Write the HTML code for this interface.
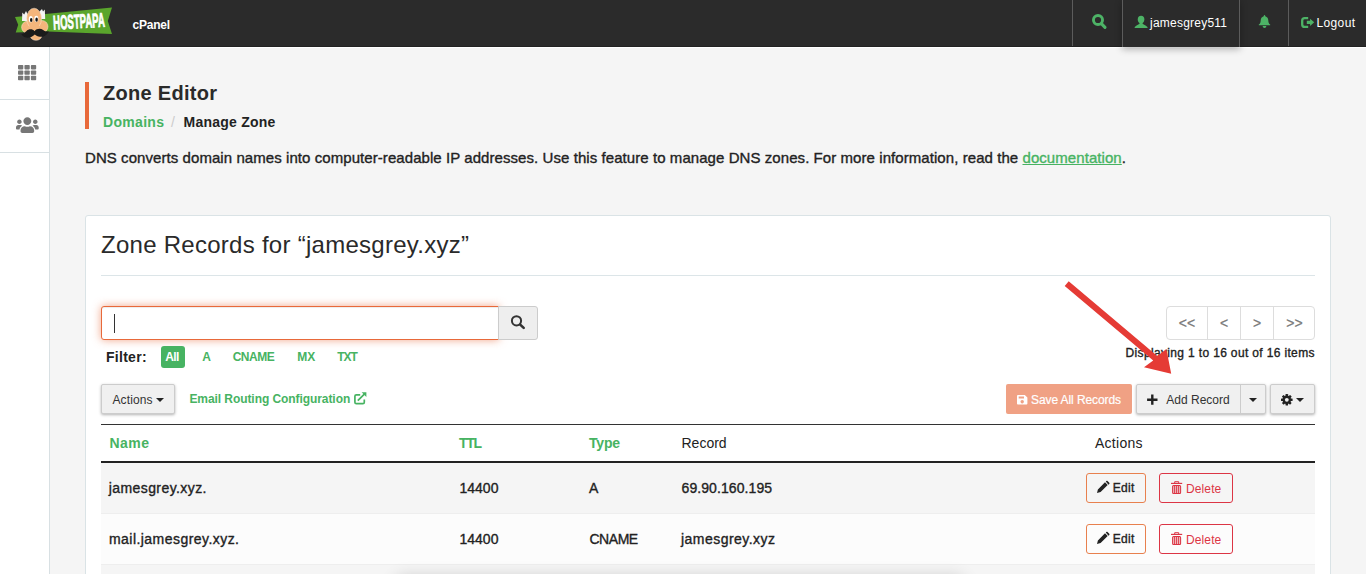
<!DOCTYPE html>
<html lang="en">
<head>
<meta charset="utf-8">
<title>Zone Editor</title>
<style>
*{box-sizing:border-box;margin:0;padding:0}
html,body{width:1366px;height:574px;overflow:hidden;background:#f5f5f5;font-family:"Liberation Sans",sans-serif;color:#222;}
a{text-decoration:none;color:#47b362}
svg{position:absolute;overflow:visible}
.abs{position:absolute;white-space:nowrap}
.sb{-webkit-text-stroke:0.35px currentColor}
#top{position:absolute;left:0;top:0;width:1366px;height:47px;background:#2b2b2b;border-bottom:1px solid #222;z-index:5}
#brand{position:absolute;left:132.5px;top:17px;color:#fff;font-size:12px;line-height:16px;font-weight:bold}
#top .sep{position:absolute;top:0;width:1px;height:46px;background:#5c5c5c}
#top .txt{position:absolute;color:#fff;font-size:12px;line-height:16px;top:15px}
#userbox{position:absolute;left:1122px;top:0;width:118px;height:47px;background:#2b2b2b;box-shadow:0 2px 7px rgba(0,0,0,.3);border-left:1px solid #5c5c5c;border-right:1px solid #5c5c5c}
#side{position:absolute;left:0;top:47px;width:50px;height:527px;background:#fff;border-right:1px solid #d8e0e3}
#side .cell{height:53px;border-bottom:1px solid #d8e0e3;position:relative}
#bar{left:85px;top:82px;width:4px;height:47px;background:#e8693a}
h1{left:103px;top:80px;font-size:20px;font-weight:bold;color:#2a2a2a;line-height:26px;letter-spacing:.3px}
#crumb{left:103px;top:112px;font-size:14px;font-weight:bold;line-height:20px}
#desc{left:85px;top:148px;font-size:15px;line-height:20px;color:#222;letter-spacing:.068px}
#panel{left:85px;top:215px;width:1246px;height:400px;background:#fff;border:1px solid #dae3e6;border-radius:3px}
h2{left:101px;top:228.5px;font-size:24px;font-weight:normal;line-height:32px;color:#2a2a2a;letter-spacing:.27px}
#hr{left:101px;top:275px;width:1214px;height:1px;background:#dce5e8}
#search{left:101px;top:306px;width:398px;height:34px;border:1px solid #e8693a;border-radius:3px 0 0 3px;background:#fff;box-shadow:0 0 8px rgba(232,105,58,.6), inset 0 1px 1px rgba(0,0,0,.075)}
#caret{left:114px;top:314px;width:1px;height:19px;background:#333}
#sbtn{left:498px;top:306px;width:40px;height:34px;border:1px solid #ccc;border-radius:0 3px 3px 0;background:#eee}
#filter{left:106px;top:347px;font-size:14px;line-height:20px;font-weight:bold;color:#222}
.fl{font-size:12px;font-weight:bold;color:#47b362;line-height:20px;top:347px}
#fall{left:160.5px;top:346px;width:24.5px;height:22px;background:#47b362;border-radius:3px}
.btn{border:1px solid #ccc;background:#f0f0f0;border-radius:2px;height:30px;box-shadow:0 1px 3px rgba(0,0,0,.3)}
.bt{font-size:12px;line-height:20px;color:#333;top:390px}
.dn{width:0;height:0;border-left:4px solid transparent;border-right:4px solid transparent;border-top:4px solid #222}
#pag{left:1166px;top:306px;width:149px;height:34px;border:1px solid #ddd;border-radius:4px;background:#fff}
#pag i{position:absolute;top:0;width:1px;height:32px;background:#ddd}
#pag span{position:absolute;top:0;line-height:32px;font-size:14px;color:#7a7a7a;-webkit-text-stroke:.25px #7a7a7a;text-align:center;font-style:normal}
#disp{left:1125.5px;top:344px;font-size:12px;line-height:18px;font-weight:normal;color:#222}
.th{top:432.5px;font-size:14px;line-height:20px}
.g{font-weight:bold;color:#47b362}
.td{font-size:14px;line-height:20px;color:#222}
.row{left:101px;width:1214px;height:51px}
.ebtn{width:60px;height:30px;border:1px solid #e8804e;border-radius:3px}
.dbtn{width:74px;height:30px;border:1px solid #dc3545;border-radius:3px}
.et{font-size:12px;line-height:18px;color:#222}
.dt{font-size:12px;line-height:18px;color:#dc3545}
</style>
</head>
<body>
<div id="top">
  <div id="brand" style="letter-spacing:-0.22px">cPanel</div>
  <div class="sep" style="left:1072px"></div>
  <div id="userbox"></div>
  <div class="sep" style="left:1288px"></div>
  <div class="txt" id="tuser" style="letter-spacing:0.23px;left:1150px">jamesgrey511</div>
  <div class="txt" id="tlogout" style="letter-spacing:0.36px;left:1316.5px">Logout</div>
</div>
<div id="side"><div class="cell"></div><div class="cell"></div></div>
<div class="abs" style="left:50px;top:47px;width:1316px;height:1px;background:#fff"></div>
<div id="bar" class="abs"></div>
<h1 class="abs">Zone Editor</h1>
<div id="crumb" class="abs"><a id="cr1" style="letter-spacing:0.31px">Domains</a> <span id="cr2" style="color:#ccc;font-weight:normal;padding:0 4.8px 0 2.8px">/</span> <span id="cr3" style="letter-spacing:0.23px">Manage Zone</span></div>
<div id="desc" class="abs sb">DNS converts domain names into computer-readable IP addresses. Use this feature to manage DNS zones. For more information, read the <a style="text-decoration:underline">documentation</a>.</div>
<div id="panel" class="abs"></div>
<h2 class="abs">Zone Records for “jamesgrey.xyz”</h2>
<div id="hr" class="abs"></div>
<div id="search" class="abs"></div><div id="caret" class="abs"></div>
<div id="sbtn" class="abs"></div>
<div id="filter" style="letter-spacing:0.28px" class="abs">Filter:</div>
<div id="fall" class="abs"></div>
<div class="abs fl" id="f0" style="letter-spacing:-0.67px;left:165.3px;color:#fff">All</div>
<div class="abs fl" id="f1" style="left:202.2px">A</div>
<div class="abs fl" id="f2" style="letter-spacing:-0.50px;left:232.7px">CNAME</div>
<div class="abs fl" id="f3" style="left:297.3px">MX</div>
<div class="abs fl" id="f4" style="letter-spacing:-1.04px;left:337.3px">TXT</div>

<div class="abs btn" style="left:101px;top:384px;width:74px"></div>
<div class="abs bt" id="bact" style="letter-spacing:0.11px;left:112.5px">Actions</div>
<div class="abs dn" style="left:156px;top:398px"></div>
<div class="abs" id="email" style="letter-spacing:-0.07px;left:189.4px;top:390px;font-size:12px;line-height:18px;color:#47b362;font-weight:bold">Email Routing Configuration</div>

<div id="pag" class="abs"><i style="left:40px"></i><i style="left:73px"></i><i style="left:106px"></i>
<span style="left:0;width:40px">&lt;&lt;</span><span style="left:41px;width:32px">&lt;</span><span style="left:74px;width:32px">&gt;</span><span style="left:107px;width:41px">&gt;&gt;</span></div>
<div id="disp" style="letter-spacing:0.35px" class="abs sb">Displaying 1 to 16 out of 16 items</div>

<div class="abs" style="left:1006px;top:384px;width:126px;height:30px;background:#f0a184;border-radius:2px"></div>
<div class="abs bt" id="bsave" style="-webkit-text-stroke:.2px #fff;letter-spacing:-0.09px;left:1031px;color:#fff">Save All Records</div>
<div class="abs btn" style="left:1136px;top:384px;width:130px"></div>
<div class="abs bt" id="badd" style="left:1166.3px">Add Record</div>
<div class="abs" style="left:1240px;top:385px;width:1px;height:28px;background:#ccc"></div>
<div class="abs dn" style="left:1249px;top:398px"></div>
<div class="abs btn" style="left:1270px;top:384px;width:45px"></div>
<div class="abs dn" style="left:1296px;top:398px"></div>

<div class="abs" style="left:101px;top:424px;width:1214px;height:1px;background:#333"></div>
<div class="abs th g" id="h1" style="letter-spacing:0.45px;left:109.5px">Name</div>
<div class="abs th g" id="h2" style="letter-spacing:-1.33px;left:459px">TTL</div>
<div class="abs th g" id="h3" style="letter-spacing:-0.21px;left:589px">Type</div>
<div class="abs th" id="h4" style="left:681.5px">Record</div>
<div class="abs th" id="h5" style="letter-spacing:0.26px;left:1095px">Actions</div>
<div class="abs" style="left:101px;top:461px;width:1214px;height:2px;background:#222"></div>
<div class="abs row" style="top:463px;background:#f5f5f5;border-bottom:1px solid #eee"></div>
<div class="abs row" style="top:514px;background:#fcfcfc;border-bottom:1px solid #eee"></div>
<div class="abs row" style="top:565px;background:#f5f5f5"></div>

<div class="abs td sb" id="r1a" style="letter-spacing:0.42px;left:108.7px;top:478px">jamesgrey.xyz.</div>
<div class="abs td sb" id="r1b" style="left:459.5px;top:478px">14400</div>
<div class="abs td sb" id="r1c" style="left:589px;top:478px">A</div>
<div class="abs td sb" id="r1d" style="letter-spacing:0.09px;left:681.5px;top:478px">69.90.160.195</div>
<div class="abs td sb" id="r2a" style="letter-spacing:0.45px;left:109px;top:529px">mail.jamesgrey.xyz.</div>
<div class="abs td sb" id="r2b" style="left:459.5px;top:529px">14400</div>
<div class="abs td sb" id="r2c" style="letter-spacing:-0.44px;left:589.4px;top:529px">CNAME</div>
<div class="abs td sb" id="r2d" style="letter-spacing:0.46px;left:681px;top:529px">jamesgrey.xyz</div>

<div class="abs ebtn" style="left:1086px;top:473px"></div>
<div class="abs dbtn" style="left:1159px;top:473px"></div>
<div class="abs ebtn" style="left:1086px;top:524px"></div>
<div class="abs dbtn" style="left:1159px;top:524px"></div>
<div class="abs et sb" id="e1" style="letter-spacing:0.30px;left:1112.8px;top:479px">Edit</div>
<div class="abs dt" id="d1" style="letter-spacing:0.12px;left:1186px;top:479.7px">Delete</div>
<div class="abs et sb" id="e2" style="letter-spacing:0.30px;left:1112.8px;top:530px">Edit</div>
<div class="abs dt" id="d2" style="letter-spacing:0.12px;left:1186px;top:530.7px">Delete</div>


<!-- logo -->
<svg id="logo" style="left:0;top:0;z-index:6" width="130" height="46">
  <polygon fill="#5aa52c" points="15,17 112,7.6 107.8,20.9 112,34 48,31.6 15.7,32.6 18.2,24.7"/>
  <path fill="#f4f4f4" d="M22 21 L22.3 12.5 L24.2 14.5 L26 11 L28 15 L28 21Z M40 19 L40 11 L42 9 L43 11.5 L44.8 9.5 L45.2 19Z"/>
  <g fill="#f4b57c" stroke="#fbe9d6" stroke-width=".5">
  <ellipse cx="36" cy="36.2" rx="5.6" ry="4.1"/>
  <ellipse cx="28" cy="27.2" rx="6.4" ry="6.2"/><ellipse cx="41.6" cy="26.6" rx="6.4" ry="6.2"/>
  <ellipse cx="34.1" cy="18.5" rx="7.4" ry="10.3"/></g>
  <ellipse cx="34.3" cy="27" rx="5" ry="4.5" fill="#f4b57c"/>
  <ellipse cx="30.8" cy="19.2" rx="2" ry="3.1" fill="#fff"/><ellipse cx="36.3" cy="18.8" rx="2" ry="3.1" fill="#fff"/>
  <ellipse cx="31.2" cy="20" rx="1.25" ry="2.1" fill="#111"/><ellipse cx="36.6" cy="19.7" rx="1.25" ry="2.1" fill="#111"/>
  <path fill="#1b1b1b" d="M34.6 31.2 C32.5 28.6 28.5 28.9 26.3 31.2 C24.8 32.8 23.2 33.9 21.3 34.2 C23.5 37.6 28 38.6 31.2 37 C32.8 36.2 33.9 35.4 34.8 34.6 C36 35.6 37.8 36.6 40 36.8 C44 37.1 47.4 34.6 48.8 31.5 C46.6 31.9 44.8 31.2 43.2 30 C40.6 28.1 36.6 28.4 34.6 31.2Z"/>
  <text transform="translate(53.6,29.6) rotate(-3.2) scale(1,1.5)" font-family="Liberation Sans, sans-serif" font-weight="bold" font-size="13.2" fill="#fff" stroke="#fff" stroke-width=".55" textLength="51.5" lengthAdjust="spacingAndGlyphs">HOSTPAPA</text>
</svg>
<!-- sidebar icons -->
<svg style="left:18.2px;top:64.5px" width="18.2" height="15.2" viewBox="0 0 18.2 15.2" fill="#777">
 <g><rect x="0" y="0" width="5.3" height="4.4" rx=".8"/><rect x="6.45" y="0" width="5.3" height="4.4" rx=".8"/><rect x="12.9" y="0" width="5.3" height="4.4" rx=".8"/>
 <rect x="0" y="5.4" width="5.3" height="4.4" rx=".8"/><rect x="6.45" y="5.4" width="5.3" height="4.4" rx=".8"/><rect x="12.9" y="5.4" width="5.3" height="4.4" rx=".8"/>
 <rect x="0" y="10.8" width="5.3" height="4.4" rx=".8"/><rect x="6.45" y="10.8" width="5.3" height="4.4" rx=".8"/><rect x="12.9" y="10.8" width="5.3" height="4.4" rx=".8"/></g>
</svg>
<svg style="left:16px;top:116.2px" width="22.7" height="18.16" viewBox="0 0 640 512" fill="#777"><path d="M96 224c35.3 0 64-28.7 64-64s-28.7-64-64-64-64 28.7-64 64 28.7 64 64 64zm448 0c35.3 0 64-28.7 64-64s-28.7-64-64-64-64 28.7-64 64 28.7 64 64 64zm32 32h-64c-17.6 0-33.5 7.1-45.1 18.6 40.3 22.1 68.9 62 75.1 109.4h66c17.7 0 32-14.3 32-32v-32c0-35.3-28.7-64-64-64zm-256 0c61.9 0 112-50.100 112-112S381.900 32 320 32 208 82.100 208 144s50.100 112 112 112zm76.800 32h-8.300c-20.800 10-43.900 16-68.500 16s-47.600-6-68.500-16h-8.300C179.600 288 128 339.600 128 403.200V432c0 26.500 21.500 48 48 48h288c26.500 0 48-21.500 48-48v-28.800c0-63.600-51.600-115.200-115.200-115.200zm-223.700-13.400C161.500 263.100 145.600 256 128 256H64c-35.300 0-64 28.700-64 64v32c0 17.700 14.300 32 32 32h65.900c6.300-47.400 34.900-87.300 75.200-109.400z"/></svg>
<!-- top icons -->
<svg style="left:0;top:0;z-index:6" width="1366" height="47"><g fill="#4db366">
<circle cx="1098" cy="20" r="4.55" fill="none" stroke="#4db366" stroke-width="2.9"/><path d="M1101.6 23.8 L1105 27.3" stroke="#4db366" stroke-width="3.1" stroke-linecap="round" fill="none"/>
<ellipse cx="1141.05" cy="19.4" rx="3.3" ry="3.7"/><path d="M1134.7 28.1 L1134.7 27 C1135.5 25.6 1138.3 24.8 1139.6 23.4 L1139.6 22 L1142.5 22 L1142.5 23.4 C1143.8 24.8 1146.7 25.6 1147.5 27 L1147.5 28.1Z"/>
<path d="M1264.5 15 C1264.9 15 1265.2 15.4 1265.3 16.2 C1267.3 16.8 1268.2 18.4 1268.3 20.4 C1268.4 22.6 1268.9 23.7 1270.2 24.6 L1270.2 25.3 L1258.8 25.3 L1258.8 24.6 C1260.1 23.7 1260.6 22.6 1260.7 20.4 C1260.8 18.4 1261.7 16.8 1263.7 16.2 C1263.8 15.4 1264.1 15 1264.5 15Z"/><path d="M1262.6 26 L1266.4 26 C1266.2 27.2 1265.5 27.9 1264.5 27.9 C1263.5 27.9 1262.8 27.2 1262.6 26Z"/>
<path d="M1308.2 18.1 L1304.7 18.1 C1303.3 18.1 1302.2 19.2 1302.2 20.6 L1302.2 24.4 C1302.2 25.8 1303.3 26.9 1304.7 26.9 L1308.2 26.9" fill="none" stroke="#4db366" stroke-width="2.3" stroke-linecap="butt"/>
<path d="M1306.8 20.8 L1310.1 20.8 L1310.1 18.7 L1314.2 22.35 L1310.1 26 L1310.1 23.9 L1306.8 23.9Z"/>
</g></svg>
<!-- search button icon -->
<svg style="left:0;top:0" width="600" height="574"><circle cx="516.5" cy="320.8" r="4.6" fill="none" stroke="#333" stroke-width="2"/><path d="M520.2 324.6 L523.7 327.9" stroke="#333" stroke-width="2.6" stroke-linecap="round"/>
<!-- external link -->
<path d="M360.2 394.9 L356.3 394.9 C355.5 394.9 354.9 395.5 354.9 396.3 L354.9 402.2 C354.9 403 355.5 403.6 356.3 403.6 L362.9 403.6 C363.7 403.6 364.3 403 364.3 402.2 L364.3 399.6" fill="none" stroke="#47b362" stroke-width="1.7"/><path d="M357.8 400.6 L364.6 393.8" stroke="#47b362" stroke-width="1.7"/><path fill="#47b362" d="M361.6 392.2 L366.4 392.2 L366.4 397Z"/></svg>
<!-- save icon -->
<svg style="left:1017px;top:394.9px" width="10.4" height="9.6" viewBox="0 0 10.4 9.6"><path fill="#fff" fill-rule="evenodd" d="M1.2 0 L7.8 0 L10.4 2.5 L10.4 8.4 C10.4 9.1 9.9 9.6 9.2 9.6 L1.2 9.6 C.5 9.6 0 9.1 0 8.4 L0 1.2 C0 .5 .5 0 1.2 0Z M1.7 1.4 L1.7 3.6 L7 3.6 L7 1.4Z M5.2 5 A1.7 1.7 0 1 0 5.21 5Z"/></svg>
<!-- plus -->
<svg style="left:0;top:0" width="1366" height="574"><path d="M1152.3 394.6 V404.8 M1147.1 399.7 H1157.5" stroke="#222" stroke-width="2.4"/></svg>
<!-- gear -->
<svg style="left:1281.3px;top:393.8px" width="11.6" height="11.6" viewBox="-5.8 -5.8 11.6 11.6"><g fill="#222"><circle r="4.3"/><rect x="-1.25" y="-5.8" width="2.5" height="11.6" rx=".5"/><rect x="-1.25" y="-5.8" width="2.5" height="11.6" rx=".5" transform="rotate(45)"/><rect x="-1.25" y="-5.8" width="2.5" height="11.6" rx=".5" transform="rotate(90)"/><rect x="-1.25" y="-5.8" width="2.5" height="11.6" rx=".5" transform="rotate(135)"/></g><circle r="1.9" fill="#f0f0f0"/></svg>
<svg style="left:0;top:0" width="1366" height="574"><g transform="translate(0,0)"><path fill="#222" d="M1097 493 L1097.9 489.4 L1105 482.3 L1107.7 485 L1100.6 492.1Z M1105.8 481.6 L1106.4 481 C1106.7 480.7 1107.2 480.7 1107.5 481 L1109.3 482.8 C1109.6 483.1 1109.6 483.6 1109.3 483.9 L1108.5 484.7Z"/>
<g stroke="#dc3545" fill="none"><path d="M1171 483.4 H1182.2" stroke-width="1.15"/><path d="M1174.7 483.4 V481.7 H1178.7 V483.4" stroke-width="1"/><rect x="1172.6" y="485.5" width="8" height="8" rx="1" stroke-width="1.05"/><path d="M1174.6 485.5 V493.5 M1176.6 485.5 V493.5 M1178.6 485.5 V493.5" stroke-width=".95"/></g><rect x="1172.6" y="485.5" width="8" height="8" fill="#dc3545" opacity=".28"/></g><g transform="translate(0,51)"><path fill="#222" d="M1097 493 L1097.9 489.4 L1105 482.3 L1107.7 485 L1100.6 492.1Z M1105.8 481.6 L1106.4 481 C1106.7 480.7 1107.2 480.7 1107.5 481 L1109.3 482.8 C1109.6 483.1 1109.6 483.6 1109.3 483.9 L1108.5 484.7Z"/>
<g stroke="#dc3545" fill="none"><path d="M1171 483.4 H1182.2" stroke-width="1.15"/><path d="M1174.7 483.4 V481.7 H1178.7 V483.4" stroke-width="1"/><rect x="1172.6" y="485.5" width="8" height="8" rx="1" stroke-width="1.05"/><path d="M1174.6 485.5 V493.5 M1176.6 485.5 V493.5 M1178.6 485.5 V493.5" stroke-width=".95"/></g><rect x="1172.6" y="485.5" width="8" height="8" fill="#dc3545" opacity=".28"/></g></svg>
<div class="abs" style="left:400px;top:582px;width:560px;height:10px;border-radius:5px;box-shadow:0 0 16px 6px rgba(0,0,0,.16);z-index:8"></div>
<svg id="arrow" style="left:0;top:0;z-index:9" width="1366" height="574"><polygon fill="#e53b35" points="1064.7,285.9 1068.7,281.3 1157.3,356.1 1166.4,349 1171.2,373.8 1144,367.2 1153.2,360.6"/></svg>
</body>
</html>
